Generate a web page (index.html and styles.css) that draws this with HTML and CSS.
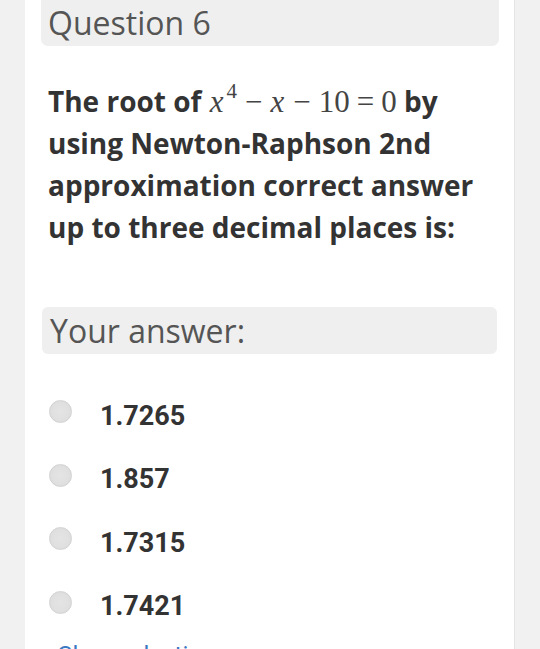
FILE: index.html
```html
<!DOCTYPE html>
<html>
<head>
<meta charset="utf-8">
<link rel="stylesheet" href="styles.css">
</head>
<body>
<div class="card">
  <div class="q-head">Question 6</div>
  <p class="q-text">The root of <span class="math"><i>x</i><sup>4</sup><span class="bin">−</span><i>x</i><span class="bin">−</span>10<span class="rel">=</span>0</span> by using Newton-Raphson 2nd approximation correct answer up to three decimal places is:</p>
  <div class="ans-head">Your answer:</div>
  <div class="options">
    <label class="opt"><span class="radio"></span><span class="lbl">1.7265</span></label>
    <label class="opt"><span class="radio"></span><span class="lbl">1.857</span></label>
    <label class="opt"><span class="radio"></span><span class="lbl">1.7315</span></label>
    <label class="opt"><span class="radio"></span><span class="lbl">1.7421</span></label>
  </div>
  <a class="clear">Clear selection</a>
</div>
</body>
</html>
```
FILE: styles.css
```css
html, body {
  margin: 0;
  padding: 0;
  background: #f1f1f1;
  height: 649px;
  overflow: hidden;
}
.card {
  margin-left: 25px;
  width: 490px;
  height: 700px;
  background: #ffffff;
  border-right: 1px solid #e4e4e4;
  box-sizing: border-box;
  display: flex;
  flex-direction: column;
}
.q-head {
  margin-left: 16px;
  width: 458px;
  height: 46px;
  box-sizing: border-box;
  background: #efefef;
  border-radius: 0 0 7px 7px;
  padding-left: 7px;
  font-family: "Open Sans", sans-serif;
  font-size: 32px;
  line-height: 46px;
  color: #555555;
}
.q-text {
  margin: 34px 0 0 23px;
  width: 440px;
  font-family: "Open Sans", sans-serif;
  font-weight: 700;
  font-size: 28px;
  line-height: 42px;
  color: #333333;
}
.math {
  font-family: "Liberation Serif", serif;
  font-weight: 400;
  font-size: 31px;
  line-height: 1;
  color: #444444;
  margin-left: 1px;
}
.math i {
  padding-right: 1px;
}
.math sup {
  font-size: 21px;
  line-height: 1;
  vertical-align: 0;
  position: relative;
  top: -14px;
  margin-left: 2px;
}
.math .bin {
  margin: 0 8px;
}
.math .rel {
  margin: 0 7px;
}
.ans-head {
  margin: 59px 0 0 17px;
  width: 455px;
  height: 47px;
  box-sizing: border-box;
  background: #efefef;
  border-radius: 6px;
  padding-left: 8px;
  font-family: "Open Sans", sans-serif;
  font-size: 32px;
  line-height: 47px;
  color: #555555;
}
.options {
  margin-top: 26px;
  display: flex;
  flex-direction: column;
}
.opt {
  height: 63.5px;
  display: flex;
  align-items: center;
  padding-left: 24px;
}
.radio {
  width: 23px;
  height: 23px;
  box-sizing: border-box;
  border-radius: 50%;
  border: 1px solid #d2d2d2;
  background: radial-gradient(circle at 50% 50%, #e4e4e4 0%, #e0e0e0 55%, #d9d9d9 100%);
  flex: none;
}
.lbl {
  margin-left: 28px;
  font-family: Roboto, sans-serif;
  font-weight: 700;
  font-size: 27px;
  color: #333333;
  position: relative;
  top: 4px;
}
.clear {
  margin: 7px 0 0 32px;
  font-family: Roboto, sans-serif;
  font-size: 24px;
  color: #3b78c2;
}
```
